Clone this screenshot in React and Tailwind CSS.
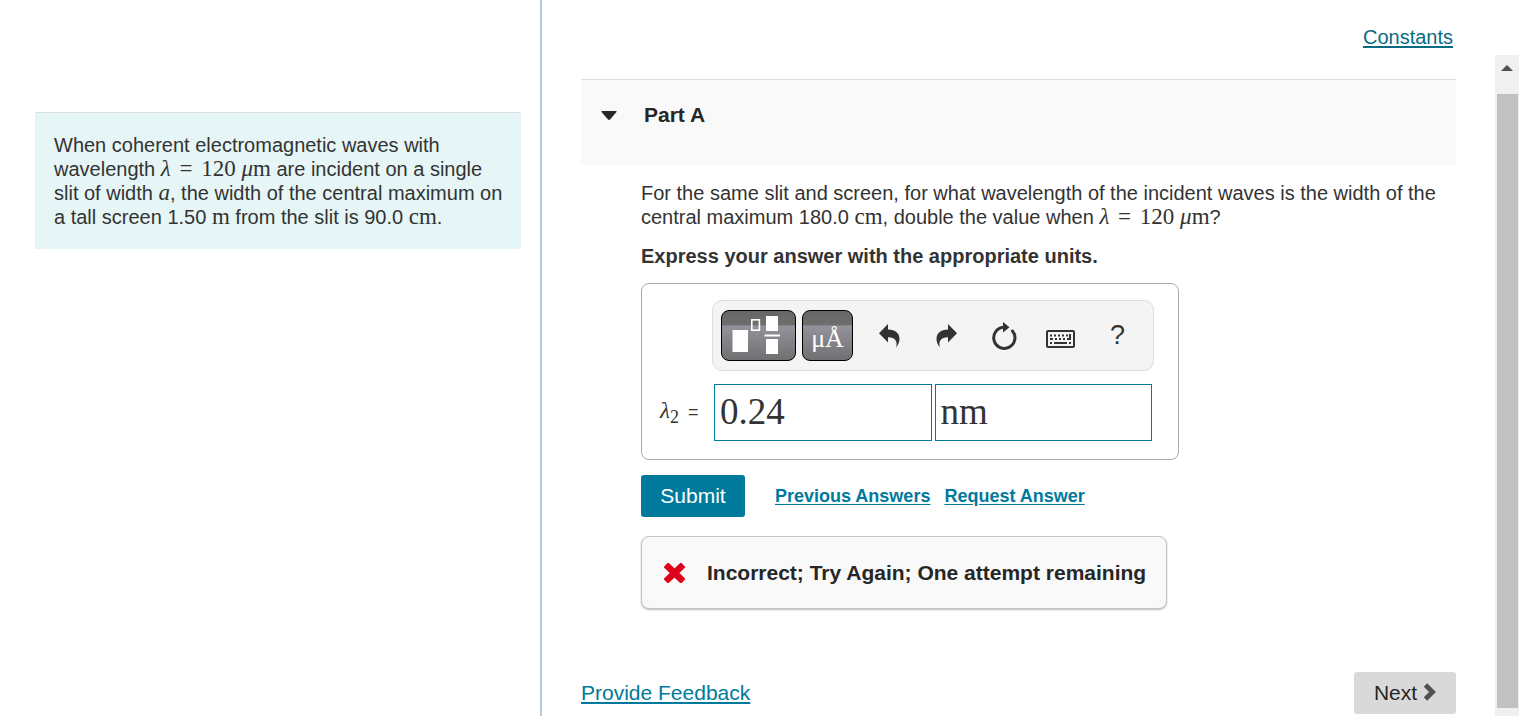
import { useState } from "react";

const LINK = "text-[#007a9c] underline underline-offset-2";

/**
 * Inline math fragment, set in a serif face next to the body text.
 */
function Maths({ children }) {
    return (
        <span className="font-['Liberation_Serif',serif] text-[23px] leading-none whitespace-nowrap">
            {children}
        </span>
    );
}

/** λ = 120 µm, used in the statement and in the question. */
function Wavelength() {
    return (
        <Maths>
            <i>λ</i> <span className="mx-[3px]">=</span> 120 <i>μ</i>m
        </Maths>
    );
}

function TemplatesIcon() {
    return (
        <svg width="54" height="42" viewBox="0 0 54 42" fill="#fff" aria-hidden="true">
            <rect x="0.5" y="15" width="15.5" height="22" />
            <rect x="19.8" y="4.8" width="7.6" height="10.4" fill="none" stroke="#fff" strokeWidth="1.6" />
            <rect x="34" y="1" width="12" height="15" />
            <rect x="32.5" y="19.5" width="15.5" height="2" />
            <rect x="34" y="24" width="12" height="15" />
        </svg>
    );
}

function UndoIcon({ flipped = false }) {
    return (
        <svg
            width="21"
            height="24"
            viewBox="0 0 21 24"
            fill="#333"
            className={flipped ? "-scale-x-100" : ""}
            aria-hidden="true"
        >
            <path d="M0 9.2 9 0v5.5c7.5 0 11.5 4 11.5 9.3 0 3.7-1.3 6.2-3.5 8.5.6-2.2.9-4.2.1-6C16 14.7 13.2 13.4 9 13.3v5.2Z" />
        </svg>
    );
}

function ResetIcon() {
    return (
        <svg width="26" height="28" viewBox="0 0 26 28" aria-hidden="true">
            <path
                d="M12.5 5.2A10.6 10.6 0 1 0 21.5 9"
                fill="none"
                stroke="#333"
                strokeWidth="3"
                strokeLinecap="round"
            />
            <path d="M12 0 18.5 5.3 12 10.5Z" fill="#333" />
        </svg>
    );
}

function KeyboardIcon() {
    return (
        <svg width="29" height="18" viewBox="0 0 29 18" aria-hidden="true">
            <rect x="1" y="1" width="27" height="16" rx="1" fill="none" stroke="#333" strokeWidth="2" />
            <path
                d="M4 5.5h2M8 5.5h2M12 5.5h2M16 5.5h2M20 5.5h2M4 9h3M9 9h2M13 9h2M17 9h2M4 13h2M8 13h13M23 13h2M21 9h4"
                stroke="#333"
                strokeWidth="2"
            />
            <path d="M24 4v6" stroke="#333" strokeWidth="2" />
        </svg>
    );
}

function Toolbar() {
    const dark =
        "shrink-0 h-[51px] rounded-lg border border-black bg-[linear-gradient(to_bottom,#666_0%,#6e6e6e_29%,#94939c_30%,#707072_100%)] text-white flex items-center justify-center";
    const plain = "w-[57px] h-[51px] flex items-center justify-center text-[#333]";

    return (
        <div className="ml-[70px] mr-6 h-[71px] pl-2 flex items-center rounded-[10px] border border-[#ddd] bg-[#f4f4f4]">
            <button type="button" aria-label="Templates" className={`${dark} w-[75px]`}>
                <TemplatesIcon />
            </button>
            <button
                type="button"
                className={`${dark} ml-[6px] w-[51px] pt-2 font-['Liberation_Serif',serif] text-[26px]`}
            >
                μÅ
            </button>
            <div className="ml-2 flex">
                <button type="button" aria-label="Undo" className={plain}>
                    <UndoIcon />
                </button>
                <button type="button" aria-label="Redo" className={plain}>
                    <UndoIcon flipped />
                </button>
                <button type="button" aria-label="Reset" className={plain}>
                    <ResetIcon />
                </button>
                <button type="button" aria-label="Keyboard" className={`${plain} pt-[6px]`}>
                    <KeyboardIcon />
                </button>
                <button type="button" className={`${plain} text-[27px]`}>
                    ?
                </button>
            </div>
        </div>
    );
}

function AnswerBox() {
    const [value, setValue] = useState("0.24");
    const [unit, setUnit] = useState("nm");
    const field =
        "min-w-0 w-full flex-1 h-[57px] px-[5px] pb-[2px] border border-[#007a9c] bg-white font-['Liberation_Serif',serif] text-[37px] text-[#333] outline-none";

    return (
        <div className="mt-[15px] w-[538px] h-[177px] pt-4 rounded-lg border border-[#aaa]">
            <Toolbar />
            <div className="mt-[13px] pl-[18px] pr-[26px] flex items-center">
                <label htmlFor="value" className="w-[54px] shrink-0 text-[18px] whitespace-nowrap">
                    <Maths>
                        <i>λ</i>
                        <sub className="text-[18px]">2</sub>
                    </Maths>{" "}
                    <span className="ml-1">=</span>
                </label>
                <div className="min-w-0 flex flex-1 gap-[3px]">
                    <input
                        id="value"
                        className={field}
                        value={value}
                        onChange={(e) => setValue(e.target.value)}
                    />
                    <input
                        aria-label="Units"
                        className={field}
                        value={unit}
                        onChange={(e) => setUnit(e.target.value)}
                    />
                </div>
            </div>
        </div>
    );
}

function PartA() {
    return (
        <section>
            <header className="h-[86px] pt-[23px] pl-5 flex items-start border-t border-[#ddd] bg-[#f9f9f9]">
                <button type="button" className="flex items-center gap-[27px] text-[21px] leading-6 font-bold text-[#262626]">
                    <svg width="16" height="9" viewBox="0 0 16 9" fill="#262626" aria-hidden="true">
                        <path d="M1 0h14q1 0 .5 1L9 8.5q-1 .8-2 0L.5 1Q0 0 1 0Z" />
                    </svg>
                    Part A
                </button>
            </header>

            <div className="pl-[60px] pt-4">
                <p className="pr-5 leading-6">
                    For the same slit and screen, for what wavelength of the incident waves is the
                    width of the central maximum 180.0 <Maths>cm</Maths>, double the value when{" "}
                    <Wavelength />?
                </p>
                <p className="mt-[15px] leading-6 font-bold">
                    Express your answer with the appropriate units.
                </p>

                <AnswerBox />

                <div className="mt-[15px] flex items-center">
                    <button
                        type="button"
                        className="w-[104px] h-[42px] rounded-[3px] bg-[#007a9c] text-[21px] text-white"
                    >
                        Submit
                    </button>
                    <a href="#previous" className={`${LINK} ml-[30px] text-lg leading-6 font-bold`}>
                        Previous Answers
                    </a>
                    <a href="#request" className={`${LINK} ml-[14px] text-lg leading-6 font-bold`}>
                        Request Answer
                    </a>
                </div>

                {/* Feedback */}
                <div className="mt-[19px] w-[526px] h-[73px] pl-[22px] flex items-center gap-[22px] rounded-lg border border-[#c4c4c4] bg-[#f9f9f9] shadow-[0_1px_2px_#bbb]">
                    <svg width="21" height="20" viewBox="0 0 21 20" aria-hidden="true">
                        <path
                            d="M4.2 4 16.8 16M16.8 4 4.2 16"
                            stroke="#e0001b"
                            strokeWidth="6.6"
                            strokeLinecap="square"
                        />
                    </svg>
                    <p className="text-[21px] font-bold text-[#262626] whitespace-nowrap">
                        Incorrect; Try Again; One attempt remaining
                    </p>
                </div>
            </div>
        </section>
    );
}

function Scrollbar() {
    return (
        <div className="w-6 mr-[14px] shrink-0 flex flex-col bg-[#f0f0f0]">
            <div className="h-[39px] pt-[10px] flex justify-center">
                <svg width="12" height="6" viewBox="0 0 12 6" fill="#505050" aria-hidden="true">
                    <path d="M6 0 12 6H0Z" />
                </svg>
            </div>
            <div className="ml-[2px] mr-px mb-2 flex-1 bg-[#c1c1c1]" />
        </div>
    );
}

function App() {
    return (
        <div className="min-h-screen flex bg-white font-['Liberation_Sans',Arial,sans-serif] text-xl text-[#333]">
            {/* Problem statement */}
            <aside className="w-[542px] shrink-0 pt-28 pl-[35px] pr-[19px] border-r-2 border-[#b8c8dc]">
                <p className="py-5 pl-[19px] pr-3 leading-6 border-t border-[#ddd] bg-[#e6f6f6]">
                    When coherent electromagnetic waves with wavelength <Wavelength /> are incident
                    on a single slit of width <Maths><i>a</i></Maths>, the width of the central
                    maximum on a tall screen 1.50 <Maths>m</Maths> from the slit is 90.0{" "}
                    <Maths>cm</Maths>.
                </p>
            </aside>

            <main className="min-w-0 flex-1 flex flex-col">
                <div className="h-[55px] pt-[23px] pr-20 text-right">
                    <a href="#constants" className="text-[#0b6b80] underline underline-offset-2">
                        Constants
                    </a>
                </div>

                <div className="flex-1 flex">
                    <div className="min-w-0 flex-1 px-[39px] pt-6 pb-[2px] flex flex-col justify-between">
                        <PartA />
                        <footer className="flex items-center justify-between text-[21px]">
                            <a href="#feedback" className={LINK}>
                                Provide Feedback
                            </a>
                            <button
                                type="button"
                                className="w-[102px] h-[42px] flex items-center justify-center gap-[6px] rounded-[3px] bg-[#d9d9d9] text-[#262626]"
                            >
                                Next
                                <svg width="13" height="20" viewBox="0 0 13 20" aria-hidden="true">
                                    <path d="M2.5 2 9.5 9 2.5 16" fill="none" stroke="#505050" strokeWidth="4.8" />
                                </svg>
                            </button>
                        </footer>
                    </div>
                    <Scrollbar />
                </div>
            </main>
        </div>
    );
}

export default App;
